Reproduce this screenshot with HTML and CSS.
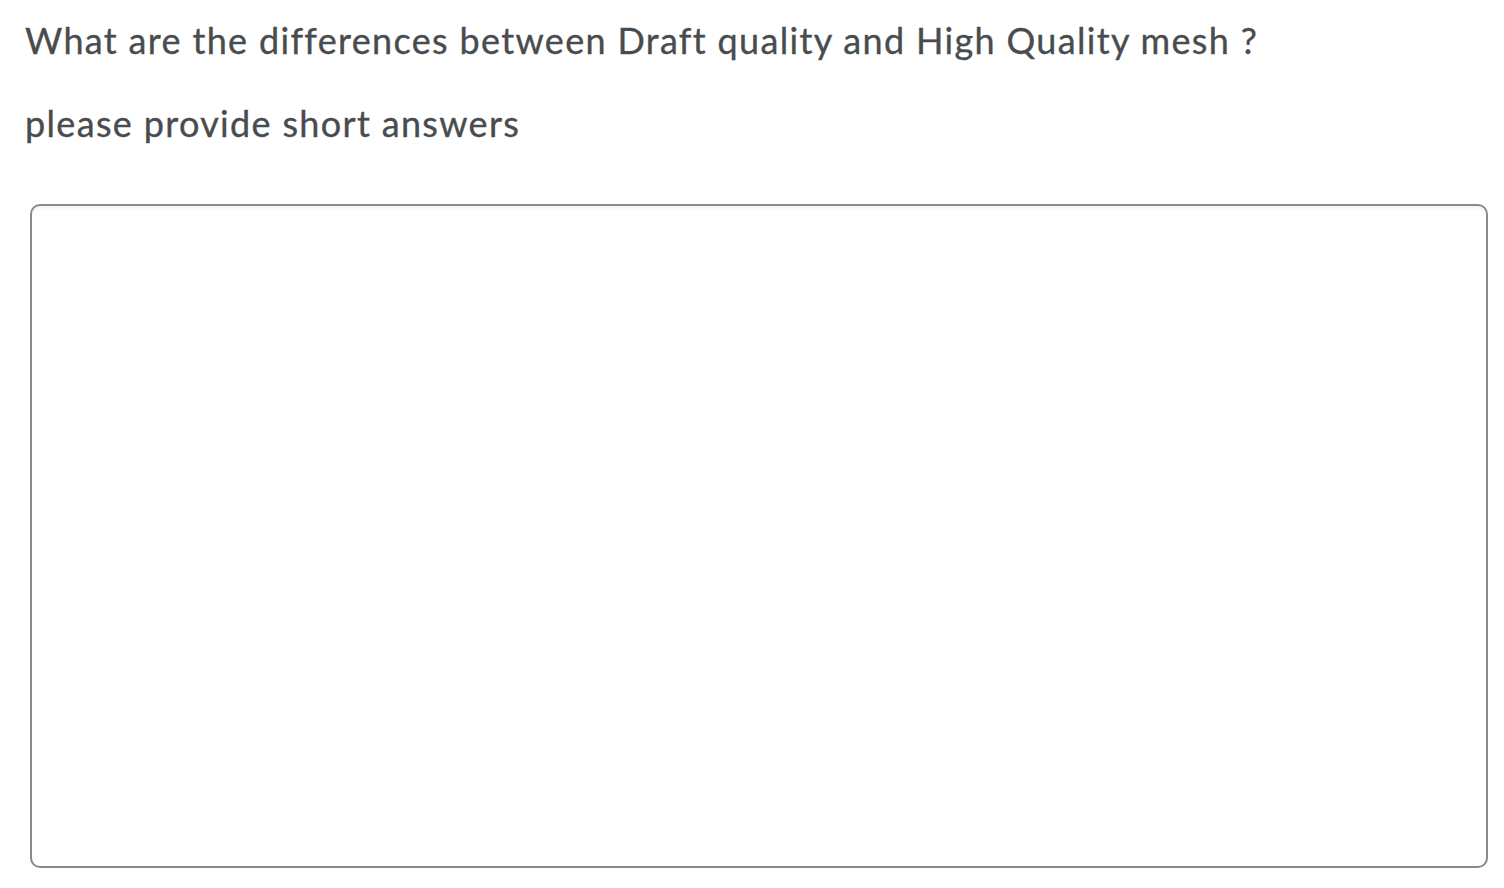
FILE: index.html
```html
<!DOCTYPE html>
<html>
<head>
<meta charset="utf-8">
<link rel="stylesheet" href="styles.css">
</head>
<body>
<div class="question">
  <p class="q-title">What are the differences between Draft quality and High Quality mesh ?</p>
  <p class="q-sub">please provide short answers</p>
  <textarea class="answer"></textarea>
</div>
</body>
</html>
```

FILE: styles.css
```css
html, body {
  margin: 0;
  padding: 0;
  background: #ffffff;
}
.question {
  font-family: Lato, "Noto Sans", sans-serif;
  color: #494c4e;
  padding: 0 0 0 25px;
  display: flex;
  flex-direction: column;
}
.q-title,
.q-sub {
  margin: 0;
  font-size: 36px;
  line-height: 42px;
  letter-spacing: 1.33px;
  -webkit-text-stroke: 0.35px #494c4e;
}
.q-title {
  padding-top: 19px;
}
.q-sub {
  padding-top: 41px;
}
.answer {
  box-sizing: border-box;
  margin: 60px 0 0 5px;
  width: 1458px;
  height: 664px;
  border: 2px solid #868b8f;
  border-radius: 10px;
  box-shadow: inset 0 4px 4px -2px rgba(0,0,0,0.06);
  resize: none;
  outline: none;
  background: #fff;
  font-family: Lato, sans-serif;
}
```
